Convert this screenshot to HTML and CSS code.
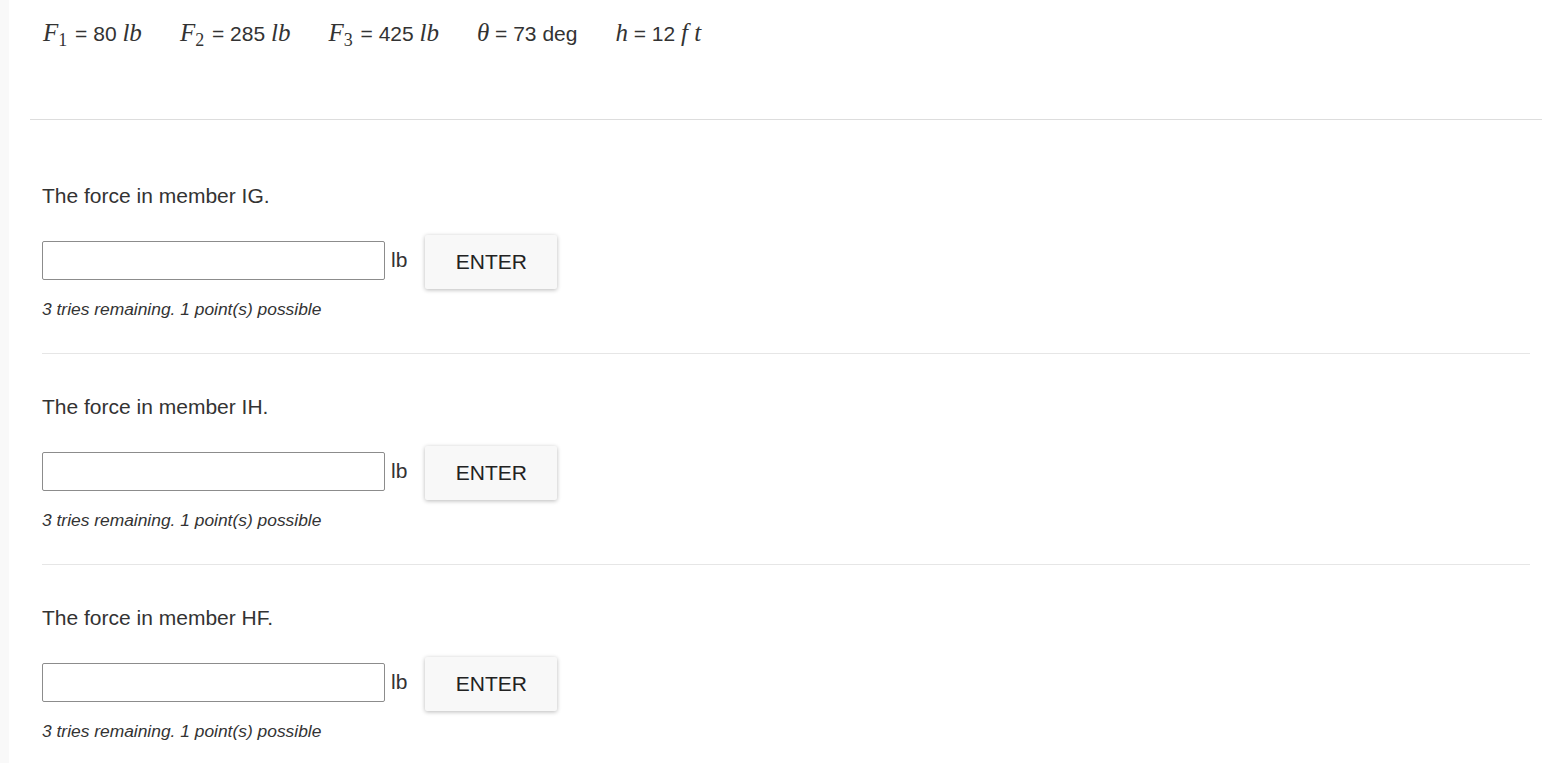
FILE: index.html
```html
<!DOCTYPE html>
<html>
<head>
<meta charset="utf-8">
<link rel="stylesheet" href="styles.css">
</head>
<body>
<div class="page">
  <div class="strip"></div>
  <main class="main">
    <div class="params">
      <span class="param"><span class="mi">F</span><span class="sub">1</span> = 80 <span class="mi">lb</span></span>
      <span class="param"><span class="mi">F</span><span class="sub">2</span> = 285 <span class="mi">lb</span></span>
      <span class="param"><span class="mi">F</span><span class="sub">3</span> = 425 <span class="mi">lb</span></span>
      <span class="param"><span class="mi">θ</span> = 73 deg</span>
      <span class="param"><span class="mi">h</span> = 12 <span class="mi">f t</span></span>
    </div>
    <div class="rule"></div>
    <div class="questions">
      <section class="q q-first">
        <p class="label">The force in member IG.</p>
        <div class="row">
          <input class="answer" type="text">
          <span class="unit">lb</span>
          <button class="btn">ENTER</button>
        </div>
        <p class="tries">3 tries remaining. 1 point(s) possible</p>
      </section>
      <section class="q">
        <p class="label">The force in member IH.</p>
        <div class="row">
          <input class="answer" type="text">
          <span class="unit">lb</span>
          <button class="btn">ENTER</button>
        </div>
        <p class="tries">3 tries remaining. 1 point(s) possible</p>
      </section>
      <section class="q">
        <p class="label">The force in member HF.</p>
        <div class="row">
          <input class="answer" type="text">
          <span class="unit">lb</span>
          <button class="btn">ENTER</button>
        </div>
        <p class="tries">3 tries remaining. 1 point(s) possible</p>
      </section>
    </div>
  </main>
</div>
</body>
</html>
```

FILE: styles.css
```css
* { box-sizing: border-box; }
html, body {
  margin: 0;
  padding: 0;
  background: #ffffff;
  font-family: "Liberation Sans", Arial, sans-serif;
  color: #333333;
}
.page {
  display: flex;
  min-height: 763px;
}
.strip {
  width: 9px;
  flex: 0 0 9px;
  background: #f9f9f9;
}
.main {
  flex: 1;
  padding: 0 9px 0 21px;
}
.params {
  height: 119px;
  padding: 18px 0 0 13px;
  display: flex;
  gap: 38px;
  font-size: 21px;
  line-height: 30px;
  white-space: nowrap;
}
.mi {
  font-family: "Liberation Serif", "DejaVu Serif", serif;
  font-style: italic;
  font-size: 25px;
}
.sub {
  font-family: "Liberation Serif", "DejaVu Serif", serif;
  font-size: 18px;
  position: relative;
  top: 5px;
  margin-right: 2px;
}
.rule {
  height: 1px;
  background: #dddddd;
}
.questions {
  padding: 0 12px;
}
.q {
  padding: 41px 0 34px;
  border-top: 1px solid #e6e6e6;
}
.q.q-first {
  border-top: none;
  padding-top: 64px;
}
.label {
  margin: 0 0 27px;
  font-size: 21px;
  line-height: 24px;
}
.row {
  display: flex;
  align-items: flex-start;
  height: 54px;
}
.answer {
  width: 343px;
  height: 39px;
  margin: 6px 0 0;
  border: 1px solid #8c8c8c;
  border-radius: 2px;
  padding: 0 8px;
  font-size: 18px;
  background: #fff;
}
.unit {
  font-size: 21px;
  line-height: 24px;
  margin: 13px 0 0 6px;
}
.btn {
  margin-left: 18px;
  width: 132px;
  height: 54px;
  border: none;
  border-radius: 2px;
  background: #f8f8f8;
  box-shadow: 0 1px 4px rgba(0, 0, 0, 0.28);
  font-family: "Liberation Sans", Arial, sans-serif;
  font-size: 21px;
  color: #222;
  padding: 0;
}
.tries {
  margin: 10px 0 0;
  font-size: 17.4px;
  line-height: 20px;
  font-style: italic;
}
```
